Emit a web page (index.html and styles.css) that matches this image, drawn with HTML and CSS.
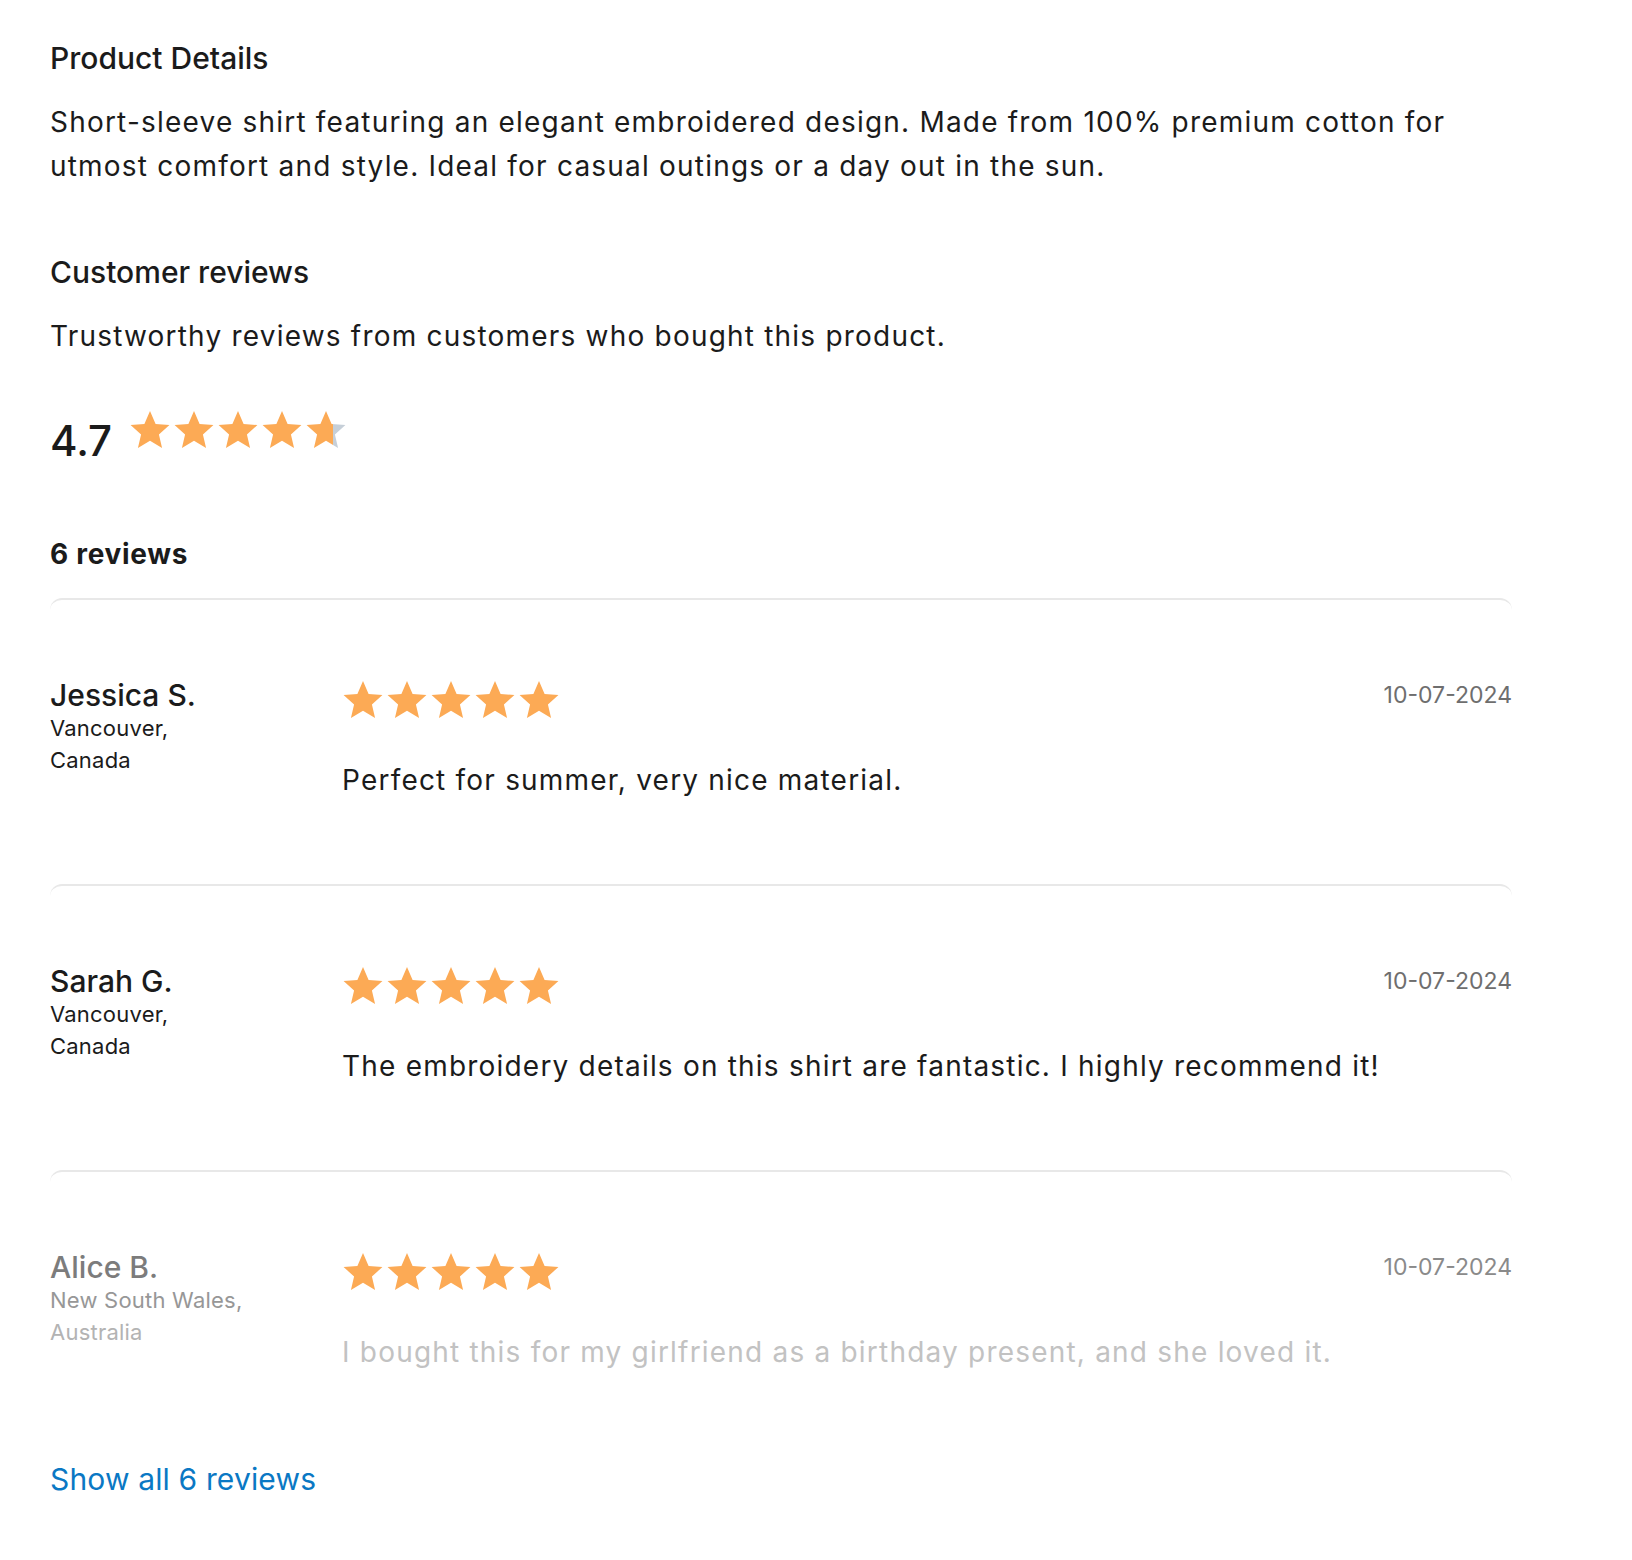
FILE: index.html
```html
<!DOCTYPE html>
<html lang="en">
<head>
  <meta charset="UTF-8" />
  <meta name="viewport" content="width=device-width, initial-scale=1.0"/>
  <title>Product Details</title>
  <link rel="stylesheet" href="styles.css">
</head>
<body>

  <svg width="0" height="0" class="defs">
    <defs>
      <symbol id="star" viewBox="0 0 24 24">
        <path d="M12 1.2l3.2 7.3 7.9.7-6 5.3 1.8 7.8L12 18.2l-6.9 4.1 1.8-7.8-6-5.3 7.9-.7z"/>
      </symbol>
      <linearGradient id="partial">
        <stop offset="68%" stop-color="#fcaa55"/>
        <stop offset="68%" stop-color="#c6cfd8"/>
      </linearGradient>
    </defs>
  </svg>

  <div class="page">
    <h2>Product Details</h2>
    <p class="desc">Short-sleeve shirt featuring an elegant embroidered design. Made from 100% premium cotton for utmost comfort and style. Ideal for casual outings or a day out in the sun.</p>

    <h2 class="reviews-title">Customer reviews</h2>
    <p class="desc">Trustworthy reviews from customers who bought this product.</p>

    <div class="rating">
      <span class="score">4.7</span>
      <div class="stars big">
        <svg><use href="#star"/></svg>
        <svg><use href="#star"/></svg>
        <svg><use href="#star"/></svg>
        <svg><use href="#star"/></svg>
        <svg class="part"><use href="#star"/></svg>
      </div>
    </div>

    <h3 class="count">6 reviews</h3>

    <div class="review">
      <div class="author">
        <div class="name">Jessica S.</div>
        <div class="place">Vancouver, Canada</div>
      </div>
      <div class="body">
        <div class="stars">
          <svg><use href="#star"/></svg>
          <svg><use href="#star"/></svg>
          <svg><use href="#star"/></svg>
          <svg><use href="#star"/></svg>
          <svg><use href="#star"/></svg>
        </div>
        <p class="text">Perfect for summer, very nice material.</p>
      </div>
      <div class="date">10-07-2024</div>
    </div>

    <div class="review">
      <div class="author">
        <div class="name">Sarah G.</div>
        <div class="place">Vancouver, Canada</div>
      </div>
      <div class="body">
        <div class="stars">
          <svg><use href="#star"/></svg>
          <svg><use href="#star"/></svg>
          <svg><use href="#star"/></svg>
          <svg><use href="#star"/></svg>
          <svg><use href="#star"/></svg>
        </div>
        <p class="text">The embroidery details on this shirt are fantastic. I highly recommend it!</p>
      </div>
      <div class="date">10-07-2024</div>
    </div>

    <div class="review faded">
      <div class="author">
        <div class="name">Alice B.</div>
        <div class="place">New South Wales,<br><span class="fade-more">Australia</span></div>
      </div>
      <div class="body">
        <div class="stars">
          <svg><use href="#star"/></svg>
          <svg><use href="#star"/></svg>
          <svg><use href="#star"/></svg>
          <svg><use href="#star"/></svg>
          <svg><use href="#star"/></svg>
        </div>
        <p class="text">I bought this for my girlfriend as a birthday present, and she loved it.</p>
      </div>
      <div class="date">10-07-2024</div>
    </div>

    <a class="show-all" href="#">Show all 6 reviews</a>
  </div>

</body>
</html>
```

FILE: styles.css
```css
body {
  margin: 0;
  padding: 0;
  background: #ffffff;
  color: #1b1b1b;
  font-family: Inter, 'Noto Sans', sans-serif;
}

.defs {
  position: absolute;
}

.page {
  max-width: 1462px;
  padding: 40px 50px 60px;
}

h2 {
  margin: 0;
  font-size: 30px;
  line-height: 36px;
  font-weight: 500;
}

.desc {
  margin: 24px 0 0;
  font-size: 28px;
  line-height: 44px;
  font-weight: 400;
  letter-spacing: 0.043em;
}

.reviews-title {
  margin-top: 66px;
}

.desc + .desc {
  margin-top: 27px;
}

.rating {
  display: flex;
  align-items: flex-start;
  gap: 17px;
  margin-top: 51px;
}

.score {
  font-size: 42px;
  line-height: 56px;
  margin-top: 4px;
  font-weight: 500;
}

.stars {
  display: flex;
  gap: 2px;
  fill: #fcaa55;
}

.stars svg {
  width: 42px;
  height: 42px;
}

.stars .part {
  fill: url(#partial);
}

.count {
  margin: 67px 0 0;
  font-size: 28px;
  line-height: 36px;
  font-weight: 700;
  letter-spacing: 0.025em;
}

.review {
  display: grid;
  grid-template-columns: 292px 1fr auto;
  margin-top: 26px;
  padding: 78px 0 82px;
  border-top: 2px solid #e8e8e8;
  border-radius: 12px;
}

.review + .review {
  margin-top: 0;
}

.name {
  font-size: 30px;
  line-height: 34px;
  font-weight: 500;
}

.place {
  max-width: 200px;
  font-size: 22px;
  line-height: 32px;
  letter-spacing: 0.01em;
}

.body {
  padding-top: 1px;
}

.text {
  margin: 37px 0 0;
  font-size: 28px;
  line-height: 44px;
  letter-spacing: 0.043em;
}

.date {
  padding-top: 1px;
  font-size: 23px;
  line-height: 32px;
  color: #6e6e6e;
}

.faded .name {
  color: #7c7c7c;
}

.faded .place {
  color: #979797;
}

.faded .fade-more {
  color: #b3b3b3;
}

.faded .text {
  color: #c2c2c2;
}

.faded .date {
  color: #8a8a8a;
}

.show-all {
  display: inline-block;
  margin-top: 5px;
  font-size: 30px;
  line-height: 36px;
  letter-spacing: 0.005em;
  color: #0a78c4;
  text-decoration: none;
}
```
